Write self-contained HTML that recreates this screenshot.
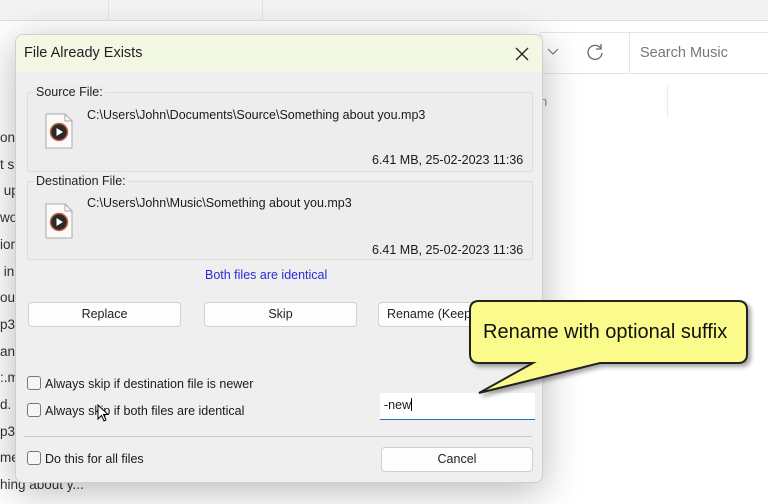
<!DOCTYPE html>
<html><head><meta charset="utf-8"><style>
*{box-sizing:border-box;margin:0;padding:0}
body{width:768px;height:504px;overflow:hidden;background:#fff;font-family:"Liberation Sans","DejaVu Sans",sans-serif;position:relative;color:#1a1a1a}
.a{position:absolute}
.t{font-size:12.5px;white-space:nowrap}
.grp{position:absolute;border:1px solid #dcdcdc;background:#ededed;border-radius:2px}
.lbl{position:absolute;top:-8px;left:6px;background:#ededed;padding:0 2px;font-size:12.5px;color:#222}
.btn{position:absolute;height:25px;background:#fdfdfd;border:1px solid #d0d0d0;border-radius:4px;font-size:12.5px;text-align:center;line-height:23px;color:#222}
.cb{position:absolute;width:14px;height:14px;border:1px solid #777;border-radius:3px;background:#f6f6f6}
.ico{position:absolute;width:28px;height:36px}
</style></head><body>
<div class="a" style="left:0;top:0;width:768px;height:21px;background:#f3f3f3;border-bottom:1px solid #dedede"></div>
<div class="a" style="left:108px;top:0;width:1px;height:20px;background:#e2e2e2"></div>
<div class="a" style="left:262px;top:0;width:1px;height:20px;background:#e2e2e2"></div>
<div class="a" style="left:540px;top:32px;width:93px;height:42px;border:1px solid #e5e5e5;background:#fff"></div>
<svg class="a" style="left:546px;top:46px" width="14" height="10"><path d="M2 3 L7 8 L12 3" fill="none" stroke="#777" stroke-width="1.2"/></svg>
<svg class="a" style="left:585px;top:42px" width="20" height="20"><path d="M15.5 6 A7 7 0 1 0 17 11" fill="none" stroke="#666" stroke-width="1.3"/><path d="M16 2 L16 7 L11 7" fill="none" stroke="#666" stroke-width="1.3"/></svg>
<div class="a" style="left:629px;top:32px;width:145px;height:42px;border:1px solid #e5e5e5;background:#fff"></div>
<div class="a t" style="left:640px;top:45px;font-size:14.5px;color:#777">Search Music</div>
<div class="a t" style="left:540px;top:94px;font-size:13px;color:#888">n</div>
<div class="a" style="left:667px;top:85px;width:1px;height:32px;background:#eaeaea"></div>
<div class="a t" style="left:0;top:125px;font-size:13.5px;line-height:26.7px;color:#333">on<br>t s<br>&nbsp;up<br>wo<br>ion<br>&nbsp;in<br>ou<br>p3<br>ann<br>:.m<br>d.<br>p3<br>me<br>hing about y...</div>
<div class="a" style="left:15px;top:34px;width:528px;height:449px;background:#efefef;border:1px solid #cfcfcf;border-radius:8px;box-shadow:0 8px 40px rgba(0,0,0,.28);overflow:hidden">
 <div class="a" style="left:0;top:0;width:528px;height:37px;background:#f2f8e4"></div>
 <div class="a t" style="left:8px;top:10px;font-size:14.5px;color:#222">File Already Exists</div>
 <svg class="a" style="left:498px;top:11px" width="16" height="16"><path d="M2 2 L14 14 M14 2 L2 14" stroke="#222" stroke-width="1.3"/></svg>
</div>
<div class="grp" style="left:27px;top:92px;width:506px;height:80px"><div class="lbl">Source File:</div></div>
<div class="grp" style="left:27px;top:181px;width:506px;height:79px"><div class="lbl">Destination File:</div></div>
<svg class="ico" style="left:45px;top:113px" viewBox="0 0 28 36"><path d="M1 1 H20 L27 8 V35 H1 Z" fill="#fafafa" stroke="#aaa"/><path d="M20 1 V8 H27" fill="none" stroke="#aaa"/><circle cx="14" cy="19" r="8.5" fill="#2a2a2a" stroke="#c8603a" stroke-width="1.5"/><path d="M11.5 15 L18 19 L11.5 23 Z" fill="#fff"/></svg>
<svg class="ico" style="left:45px;top:203px" viewBox="0 0 28 36"><path d="M1 1 H20 L27 8 V35 H1 Z" fill="#fafafa" stroke="#aaa"/><path d="M20 1 V8 H27" fill="none" stroke="#aaa"/><circle cx="14" cy="19" r="8.5" fill="#2a2a2a" stroke="#c8603a" stroke-width="1.5"/><path d="M11.5 15 L18 19 L11.5 23 Z" fill="#fff"/></svg>
<div class="a t" style="left:87px;top:108px">C:\Users\John\Documents\Source\Something about you.mp3</div>
<div class="a t" style="left:372px;top:153px">6.41 MB, 25-02-2023 11:36</div>
<div class="a t" style="left:87px;top:196px">C:\Users\John\Music\Something about you.mp3</div>
<div class="a t" style="left:372px;top:243px">6.41 MB, 25-02-2023 11:36</div>
<div class="a t" style="left:205px;top:268px;color:#2b2bd6">Both files are identical</div>
<div class="btn" style="left:28px;top:302px;width:153px">Replace</div>
<div class="btn" style="left:204px;top:302px;width:153px">Skip</div>
<div class="btn" style="left:378px;top:302px;width:155px;text-align:left;padding-left:8px;overflow:hidden">Rename (Keep both)</div>
<div class="cb" style="left:27px;top:376px"></div>
<div class="a t" style="left:45px;top:377px">Always skip if destination file is newer</div>
<div class="cb" style="left:27px;top:403px"></div>
<div class="a t" style="left:45px;top:404px">Always skip if both files are identical</div>
<div class="a" style="left:380px;top:393px;width:155px;height:27px;background:#fff;border-bottom:1.5px solid #1f6fc5"></div>
<div class="a t" style="left:384px;top:398px">-new<span style="display:inline-block;width:1px;height:13px;background:#000;vertical-align:-2px"></span></div>
<div class="a" style="left:24px;top:436px;width:508px;height:1px;background:#c8c8c8"></div>
<div class="cb" style="left:27px;top:451px"></div>
<div class="a t" style="left:45px;top:452px">Do this for all files</div>
<div class="btn" style="left:381px;top:447px;width:152px">Cancel</div>
<svg class="a" style="left:97px;top:404px" width="14" height="20"><path d="M1 1 L1 15 L4.5 11.5 L7 17 L9 16 L6.5 10.5 L11 10.5 Z" fill="#fff" stroke="#000" stroke-width="1"/></svg>
<svg class="a" style="left:460px;top:295px" width="300" height="110">
 <defs><filter id="s" x="-10%" y="-10%" width="130%" height="140%"><feDropShadow dx="3" dy="3" stdDeviation="2" flood-opacity=".35"/></filter></defs>
 <path d="M19 6 H278 Q287 6 287 15 V59 Q287 68 278 68 H140 L19 98 L73 68 H19 Q10 68 10 59 V15 Q10 6 19 6 Z" fill="#fbfb8c" stroke="#222" stroke-width="2" filter="url(#s)"/>
</svg>
<div class="a t" style="left:483px;top:321px;font-size:20px;color:#111">Rename with optional suffix</div>
</body></html>
